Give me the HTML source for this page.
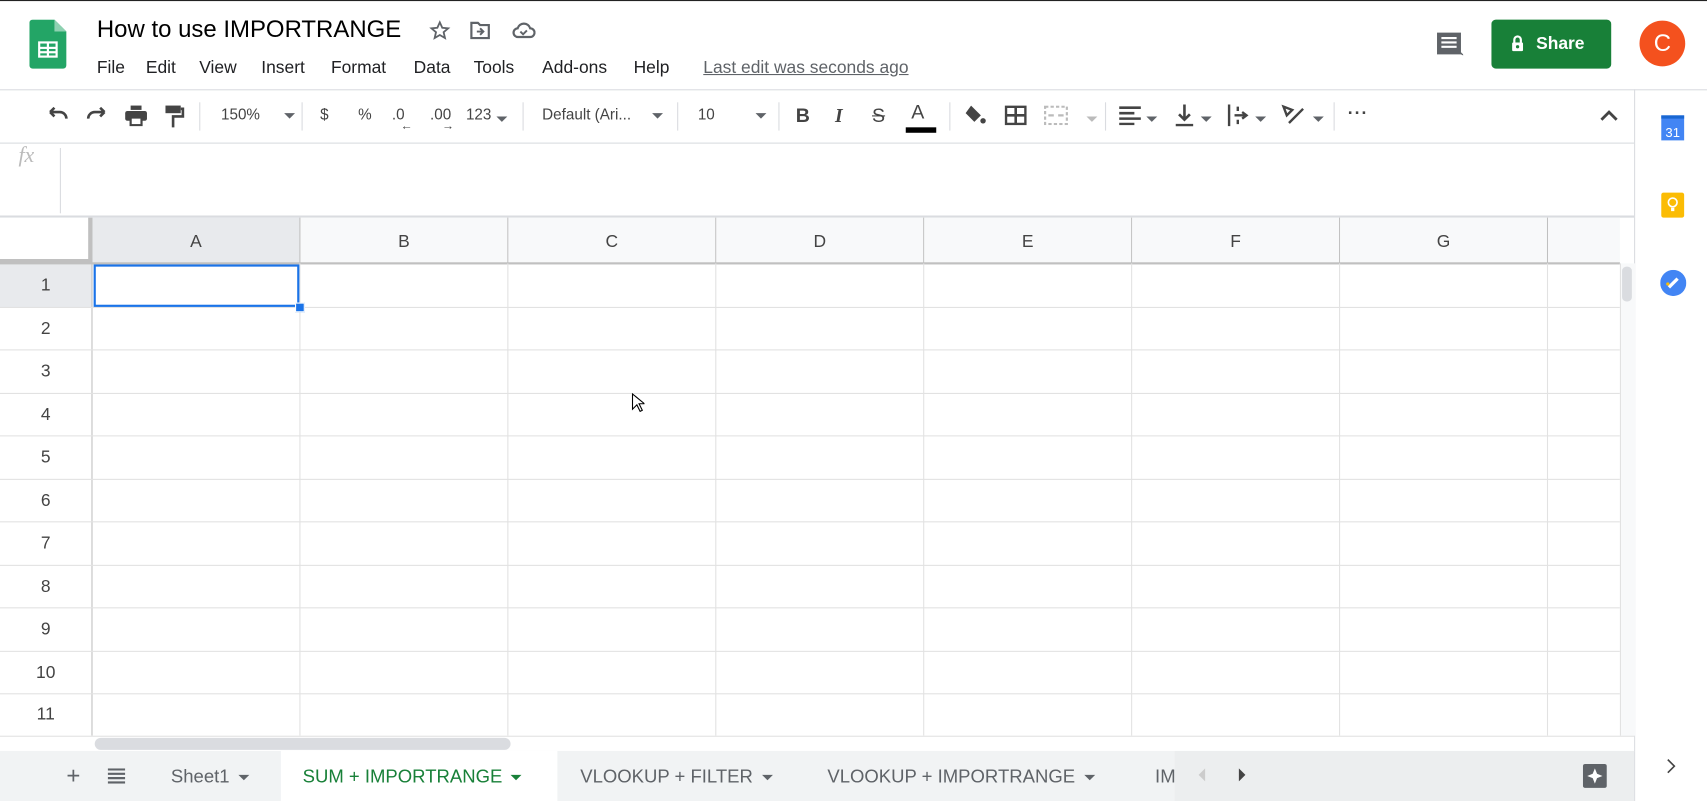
<!DOCTYPE html>
<html><head><meta charset="utf-8"><style>
html,body{margin:0;padding:0;width:1707px;height:801px;overflow:hidden;background:#fff}
#w{position:absolute;left:0;top:0;width:1568px;height:736px;transform:scale(1.08865,1.0883);transform-origin:0 0;font-family:"Liberation Sans",Arial,sans-serif;color:#202124}
.a{position:absolute}
.menu span{position:absolute;top:54px;font-size:16px;color:#202124}
.tb{position:absolute;top:97px;font-size:14px;color:#444}
.tsep{position:absolute;top:94px;width:1px;height:26px;background:#dadce0}
.ch{position:absolute;top:200px;height:42px;background:#f8f9fa;border-right:1px solid #c0c0c0;box-sizing:border-box;text-align:center;line-height:45px;font-size:16px;color:#444}
.rh{position:absolute;left:0;width:84px;background:#fff;box-sizing:border-box;text-align:center;font-size:16px;color:#444}
.vl{position:absolute;top:242px;width:1px;height:434px;background:#e2e2e2}
.hl{position:absolute;left:0;width:1488px;height:1px;background:#e2e2e2}
.tab{position:absolute;top:704px;font-size:17px;color:#5f6368}
.dd{display:inline-block;width:0;height:0;border-left:5px solid transparent;border-right:5px solid transparent;border-top:5px solid #5f6368;vertical-align:middle;margin-left:8px}
</style></head><body><div id="w">
<div class="a" style="left:0;top:0;width:1568px;height:1px;background:#222"></div>
<svg class="a" style="left:27px;top:18px" width="34" height="46" viewBox="0 0 34 46"><path d="M3 0H23L34 11V42a3 3 0 0 1-3 3H3a3 3 0 0 1-3-3V3a3 3 0 0 1 3-3z" fill="#23a566"/><path d="M23 0V11H34z" fill="#8ed1b1"/><rect x="8" y="20" width="18" height="15" fill="#fff"/><g fill="#23a566"><rect x="10" y="22" width="6" height="3"/><rect x="18" y="22" width="6" height="3"/><rect x="10" y="27" width="6" height="2"/><rect x="18" y="27" width="6" height="2"/><rect x="10" y="31" width="6" height="2"/><rect x="18" y="31" width="6" height="2"/></g></svg>
<div class="a" style="left:89px;top:14px;font-size:22px;color:#000">How to use IMPORTRANGE</div>
<svg class="a" style="left:394px;top:18px" width="20" height="20" viewBox="0 0 24 24"><path d="M12 3l2.7 6 6.5.6-5 4.3 1.5 6.4L12 17l-5.7 3.3 1.5-6.4-5-4.3 6.5-.6z" fill="none" stroke="#5f6368" stroke-width="2"/></svg>
<svg class="a" style="left:431px;top:19px" width="20" height="18" viewBox="0 0 20 18"><path d="M2 2h6l2 2h8v12H2z" fill="none" stroke="#5f6368" stroke-width="2"/><path d="M7 10h6M10 7l3 3-3 3" fill="none" stroke="#5f6368" stroke-width="1.8"/></svg>
<svg class="a" style="left:470px;top:19px" width="22" height="18" viewBox="0 0 22 18"><path d="M6 15a4 4 0 0 1-.5-8A6 6 0 0 1 17 7a4 4 0 0 1 0 8z" fill="none" stroke="#5f6368" stroke-width="2"/><path d="M8 10l2.5 2.5L14 9" fill="none" stroke="#5f6368" stroke-width="1.8"/></svg>
<div class="menu"><span style="left:89px">File</span><span style="left:134px">Edit</span><span style="left:183px">View</span><span style="left:240px">Insert</span><span style="left:304px">Format</span><span style="left:380px">Data</span><span style="left:435px">Tools</span><span style="left:498px">Add-ons</span><span style="left:582px">Help</span><span style="left:646px;color:#5f6368;text-decoration:underline">Last edit was seconds ago</span></div>
<svg class="a" style="left:1318px;top:28px" width="26" height="26" viewBox="0 0 26 26"><path d="M2 2h22v18l4 4-4-2H2z" fill="#5f6368"/><path d="M6 7h14M6 11h14M6 15h14" stroke="#fff" stroke-width="2"/></svg>
<div class="a" style="left:1370px;top:18px;width:110px;height:45px;background:#188038;border-radius:4px;color:#fff;font-size:16px;font-weight:bold;line-height:45px"><svg style="position:absolute;left:18px;top:14px" width="12" height="16" viewBox="0 0 12 16"><path d="M3 7V4.5a3 3 0 0 1 6 0V7" fill="none" stroke="#fff" stroke-width="2"/><rect x="1" y="7" width="10" height="8" rx="1" fill="#fff"/><circle cx="6" cy="11" r="1.5" fill="#188038"/></svg><span style="position:absolute;left:41px">Share</span></div>
<div class="a" style="left:1506px;top:19px;width:42px;height:42px;border-radius:50%;background:#f4511e;color:#fff;font-size:22px;text-align:center;line-height:42px">C</div>
<div class="a" style="left:0;top:82px;width:1568px;height:1px;background:#dadce0"></div>
<div class="a" style="left:1501px;top:82px;width:1px;height:654px;background:#dadce0"></div>
<div class="a" style="left:1526px;top:106px;width:21px;height:23px;background:#4285f4;color:#fff;font-size:12px;text-align:center;line-height:26px;border-top:3px solid #1967d2;box-sizing:border-box">31</div>
<div class="a" style="left:1526px;top:177px;width:21px;height:23px;background:#fbbc04;border-radius:2px"><svg width="21" height="23"><circle cx="10.5" cy="9" r="4" fill="none" stroke="#fff" stroke-width="1.5"/><path d="M9 14h3v3H9z" fill="#fff"/></svg></div>
<svg class="a" style="left:1525px;top:248px" width="24" height="24"><circle cx="12" cy="12" r="12" fill="#4285f4"/><path d="M8 16L16 8" stroke="#fff" stroke-width="3"/><circle cx="7" cy="13" r="1.5" fill="#fbbc04"/></svg>
<svg class="a" style="left:1530px;top:696px" width="10" height="16"><path d="M2 2l6 6-6 6" fill="none" stroke="#444" stroke-width="1.5"/></svg>
<svg class="a" style="left:42px;top:97px" width="22" height="18" viewBox="0 0 22 18"><path d="M4 6h9a6 6 0 0 1 6 6M4 6l4-4M4 6l4 4" fill="none" stroke="#444" stroke-width="2.4"/></svg>
<svg class="a" style="left:78px;top:97px" width="22" height="18" viewBox="0 0 22 18"><path d="M18 6H9a6 6 0 0 0-6 6M18 6l-4-4M18 6l-4 4" fill="none" stroke="#444" stroke-width="2.4"/></svg>
<svg class="a" style="left:114px;top:96px" width="22" height="20" viewBox="0 0 22 20"><rect x="6" y="1" width="10" height="4" fill="#444"/><rect x="1" y="6" width="20" height="9" rx="2" fill="#444"/><rect x="6" y="12" width="10" height="7" fill="#fff" stroke="#444" stroke-width="2"/></svg>
<svg class="a" style="left:150px;top:96px" width="20" height="22" viewBox="0 0 20 22"><rect x="2" y="1" width="14" height="7" fill="#444"/><path d="M16 4h2v7H9v10" fill="none" stroke="#444" stroke-width="2.4"/></svg>
<div class="tsep" style="left:183px"></div>
<div class="tb" style="left:203px">150%</div><div class="tb" style="left:253px"><span class="dd"></span></div>
<div class="tsep" style="left:277px"></div>
<div class="tb" style="left:294px">$</div><div class="tb" style="left:329px">%</div><div class="tb" style="left:360px">.0<br></div><div class="a" style="left:368px;top:110px;font-size:11px;color:#444">←</div>
<div class="tb" style="left:395px">.00</div><div class="a" style="left:406px;top:110px;font-size:11px;color:#444">→</div>
<div class="tb" style="left:428px">123</div><div class="a" style="left:450px;top:101px"><span class="dd" style="margin-left:6px"></span></div>
<div class="tsep" style="left:480px"></div>
<div class="tb" style="left:498px">Default (Ari...</div><div class="tb" style="left:591px"><span class="dd"></span></div>
<div class="tsep" style="left:622px"></div>
<div class="tb" style="left:641px">10</div><div class="tb" style="left:686px"><span class="dd"></span></div>
<div class="tsep" style="left:715px"></div>
<div class="tb" style="left:731px;font-weight:bold;font-size:18px;top:96px">B</div>
<div class="tb" style="left:767px;font-style:italic;font-size:18px;top:96px;font-family:'Liberation Serif',serif;font-weight:bold">I</div>
<div class="tb" style="left:801px;font-size:18px;top:96px;text-decoration:line-through">S</div>
<div class="tb" style="left:837px;font-size:18px;top:93px">A</div><div class="a" style="left:832px;top:117px;width:28px;height:5px;background:#000"></div>
<div class="tsep" style="left:872px"></div>
<svg class="a" style="left:884px;top:96px" width="22" height="20" viewBox="0 0 22 20"><path d="M8 1l9 9-6 6-8-8z" fill="#444"/><circle cx="19" cy="15" r="2.5" fill="#444"/></svg>
<svg class="a" style="left:923px;top:97px" width="20" height="18" viewBox="0 0 20 18"><path d="M1 1h18v16H1zM10 1v16M1 9h18" fill="none" stroke="#444" stroke-width="2.4"/></svg>
<svg class="a" style="left:959px;top:97px" width="22" height="18" viewBox="0 0 22 18"><path d="M1 1h20v16H1z" fill="none" stroke="#bbb" stroke-width="2" stroke-dasharray="3 2"/><path d="M4 9h5M18 9h-5" stroke="#bbb" stroke-width="2"/></svg>
<div class="a" style="left:990px;top:101px"><span class="dd" style="border-top-color:#bbb"></span></div>
<div class="tsep" style="left:1015px"></div>
<svg class="a" style="left:1028px;top:97px" width="20" height="18"><path d="M0 2h20M0 7h14M0 12h20M0 17h14" stroke="#444" stroke-width="2.4"/></svg><div class="a" style="left:1045px;top:101px"><span class="dd"></span></div>
<svg class="a" style="left:1078px;top:96px" width="20" height="20"><path d="M10 0v14M5 9l5 5 5-5M2 19h16" fill="none" stroke="#444" stroke-width="2.4"/></svg><div class="a" style="left:1095px;top:101px"><span class="dd"></span></div>
<svg class="a" style="left:1127px;top:96px" width="20" height="20"><path d="M2 0v20M10 2v4M10 14v4M7 10h11M14 7l4 3-4 3" fill="none" stroke="#444" stroke-width="2.2"/></svg><div class="a" style="left:1145px;top:101px"><span class="dd"></span></div>
<svg class="a" style="left:1177px;top:96px" width="22" height="20"><path d="M2 2l8 3-5 5z M7 17L20 4" fill="none" stroke="#444" stroke-width="2.2"/></svg><div class="a" style="left:1198px;top:101px"><span class="dd"></span></div>
<div class="tsep" style="left:1225px"></div>
<div class="tb" style="left:1238px;font-size:16px;top:96px;font-weight:bold;letter-spacing:1px">···</div>
<svg class="a" style="left:1469px;top:100px" width="18" height="12"><path d="M2 10l7-7 7 7" fill="none" stroke="#444" stroke-width="2.6"/></svg>
<div class="a" style="left:0;top:131px;width:1501px;height:1px;background:#dadce0"></div>
<div class="a" style="left:17px;top:132px;font-size:20px;font-style:italic;color:#bbb;font-family:'Liberation Serif',serif">fx</div>
<div class="a" style="left:55px;top:136px;width:1px;height:60px;background:#dadce0"></div>
<div class="a" style="left:0;top:198px;width:1501px;height:2px;background:#dadce0"></div>
<div class="a" style="left:0;top:200px;width:85px;height:42px;background:#fff;border-right:4px solid #c0c0c0;border-bottom:4px solid #c0c0c0;box-sizing:border-box"></div>
<div class="ch" style="left:85px;width:191px;background:#e8eaed">A</div>
<div class="ch" style="left:276px;width:191px">B</div>
<div class="ch" style="left:467px;width:191px">C</div>
<div class="ch" style="left:658px;width:191px">D</div>
<div class="ch" style="left:849px;width:191px">E</div>
<div class="ch" style="left:1040px;width:191px">F</div>
<div class="ch" style="left:1231px;width:191px">G</div>
<div class="ch" style="left:1422px;width:66px;border-right:none"></div>
<div class="a" style="left:0;top:241px;width:1488px;height:2px;background:#c0c0c0"></div>
<div class="rh" style="top:243px;height:40px;line-height:40px;background:#e8eaed">1</div>
<div class="rh" style="top:283px;height:39px;line-height:39px">2</div>
<div class="rh" style="top:322px;height:40px;line-height:40px">3</div>
<div class="rh" style="top:362px;height:39px;line-height:39px">4</div>
<div class="rh" style="top:401px;height:40px;line-height:40px">5</div>
<div class="rh" style="top:441px;height:39px;line-height:39px">6</div>
<div class="rh" style="top:480px;height:40px;line-height:40px">7</div>
<div class="rh" style="top:520px;height:39px;line-height:39px">8</div>
<div class="rh" style="top:559px;height:40px;line-height:40px">9</div>
<div class="rh" style="top:599px;height:39px;line-height:39px">10</div>
<div class="rh" style="top:638px;height:38px;line-height:38px">11</div>
<div class="a" style="left:84px;top:243px;width:1px;height:433px;background:#c0c0c0"></div>
<div class="vl" style="left:275px"></div><div class="vl" style="left:466px"></div><div class="vl" style="left:657px"></div><div class="vl" style="left:848px"></div><div class="vl" style="left:1039px"></div><div class="vl" style="left:1230px"></div><div class="vl" style="left:1421px"></div>
<div class="hl" style="top:282px"></div><div class="hl" style="top:321px"></div><div class="hl" style="top:361px"></div><div class="hl" style="top:400px"></div><div class="hl" style="top:440px"></div><div class="hl" style="top:479px"></div><div class="hl" style="top:519px"></div><div class="hl" style="top:558px"></div><div class="hl" style="top:598px"></div><div class="hl" style="top:637px"></div>
<div class="a" style="left:86px;top:243px;width:189px;height:39px;border:2px solid #1a73e8;box-sizing:border-box"></div>
<div class="a" style="left:271px;top:278px;width:7px;height:7px;background:#1a73e8;border:1px solid #fff"></div>
<svg class="a" style="left:580px;top:361px" width="12" height="18"><path d="M1 1v14l4-4 3 6 2-1-3-6h5z" fill="#fff" stroke="#000" stroke-width="1"/></svg>
<div class="a" style="left:1488px;top:242px;width:13px;height:434px;background:#f8f9fa;border-left:1px solid #e2e2e2"></div>
<div class="a" style="left:1490px;top:245px;width:9px;height:32px;background:#dadce0;border-radius:4px"></div>
<div class="a" style="left:0;top:676px;width:1501px;height:14px;background:#fff;border-top:1px solid #e2e2e2"></div>
<div class="a" style="left:87px;top:678px;width:382px;height:11px;background:#dadce0;border-radius:6px"></div>
<div class="a" style="left:0;top:690px;width:1501px;height:46px;background:#f1f3f4"></div>
<div class="a" style="left:258px;top:690px;width:254px;height:46px;background:#fff"></div>
<div class="a" style="left:1079px;top:690px;width:422px;height:46px;background:#eceeef"></div>
<div class="a" style="left:61px;top:700px;font-size:22px;color:#5f6368">+</div>
<svg class="a" style="left:99px;top:706px" width="16" height="14"><path d="M0 1h16M0 5h16M0 9h16M0 13h16" stroke="#5f6368" stroke-width="2"/></svg>
<div class="tab" style="left:157px">Sheet1<span class="dd"></span></div>
<div class="tab" style="left:278px;color:#188038">SUM + IMPORTRANGE<span class="dd" style="border-top-color:#188038"></span></div>
<div class="tab" style="left:533px">VLOOKUP + FILTER<span class="dd"></span></div>
<div class="tab" style="left:760px">VLOOKUP + IMPORTRANGE<span class="dd"></span></div>
<div class="tab" style="left:1061px;width:18px;overflow:hidden">IMPORT</div>
<svg class="a" style="left:1100px;top:706px" width="8" height="12"><path d="M7 0L1 6l6 6z" fill="#ccc"/></svg>
<svg class="a" style="left:1137px;top:706px" width="8" height="12"><path d="M1 0l6 6-6 6z" fill="#444"/></svg>
<svg class="a" style="left:1454px;top:702px" width="22" height="24"><rect x="0" y="0" width="22" height="22" rx="2" fill="#5f6368"/><path d="M11 4l2 5 5 2-5 2-2 5-2-5-5-2 5-2z" fill="#fff"/></svg>
</div></body></html>
